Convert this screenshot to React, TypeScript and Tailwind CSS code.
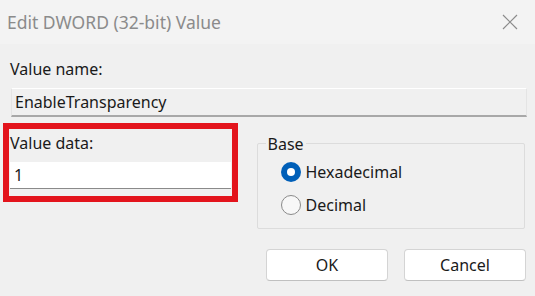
import React, { useState } from 'react';

export default function App() {
  const [base, setBase] = useState<'hex' | 'dec'>('hex');
  const [data, setData] = useState('1');

  const Radio = ({ value, label }: { value: 'hex' | 'dec'; label: string }) => {
    const checked = base === value;
    return (
      <label className="flex items-center gap-[5px] cursor-pointer h-[22px]" onClick={() => setBase(value)}>
        {checked ? (
          <span className="w-[20px] h-[20px] rounded-full bg-[#005fb8] flex items-center justify-center">
            <span className="w-[8px] h-[8px] rounded-full bg-white" />
          </span>
        ) : (
          <span className="w-[20px] h-[20px] rounded-full border-[1.5px] border-[#8a8a8a] bg-[#f7f7f7]" />
        )}
        <span>{label}</span>
      </label>
    );
  };

  return (
    <div
      className="w-[535px] h-[296px] bg-[#f0f0f0] text-[#1a1a1a] text-[16px] overflow-hidden"
      style={{ fontFamily: '"Segoe UI", "Noto Sans", sans-serif' }}
    >
      <div className="h-[44px] bg-[#f3f3f3] flex items-center justify-between pl-[7px] pr-[17px]">
        <span className="text-[17.5px] text-[#8b8b8b]">Edit DWORD (32-bit) Value</span>
        <svg width="16" height="16" viewBox="0 0 16 16" className="text-[#8b8b8b]">
          <path d="M1 1 L15 15 M15 1 L1 15" stroke="currentColor" strokeWidth="1.2" fill="none" />
        </svg>
      </div>

      <div className="px-[10px] pt-[15px]">
        <div className="leading-[20px]">Value name:</div>
        <div className="mt-[9px] ml-px mr-[-2px] h-[29px] bg-[#f0f0f0] border border-[#e4e4e4] border-t-white border-b-[2px] border-b-[#a8a8a8] flex items-center px-[3px]">
          EnableTransparency
        </div>

        <div className="flex mt-[6px]">
          <div className="-ml-[7px] w-[236px] h-[79px] border-[6px] border-[#e3141c] px-[1px] pt-[4px]">
            <div className="leading-[20px]">Value data:</div>
            <div className="mt-[9px] h-[27px] bg-white border-b-[1.5px] border-[#8a8a8a] flex items-center px-[4px]">
              <input
                value={data}
                onChange={e => setData(e.target.value)}
                className="w-full bg-transparent outline-none"
              />
            </div>
          </div>

          <div className="ml-[19px] w-[270px] mt-[20px] h-[86px] border border-[#dcdcdc] rounded-[2px] relative px-[23px] pt-[17px]">
            <span className="absolute -top-[12px] left-[8px] bg-[#f0f0f0] px-[2px]">Base</span>
            <Radio value="hex" label="Hexadecimal" />
            <div className="mt-[11px]">
              <Radio value="dec" label="Decimal" />
            </div>
          </div>
        </div>

        <div className="flex justify-end gap-[16px] mt-[20px] mr-[-1px]">
          <button className="w-[122px] h-[32px] bg-white border border-[#d4d4d4] border-b-[#c0c0c0] rounded-[4px]">
            OK
          </button>
          <button className="w-[122px] h-[32px] bg-white border border-[#d4d4d4] border-b-[#c0c0c0] rounded-[4px]">
            Cancel
          </button>
        </div>
      </div>
    </div>
  );
}
